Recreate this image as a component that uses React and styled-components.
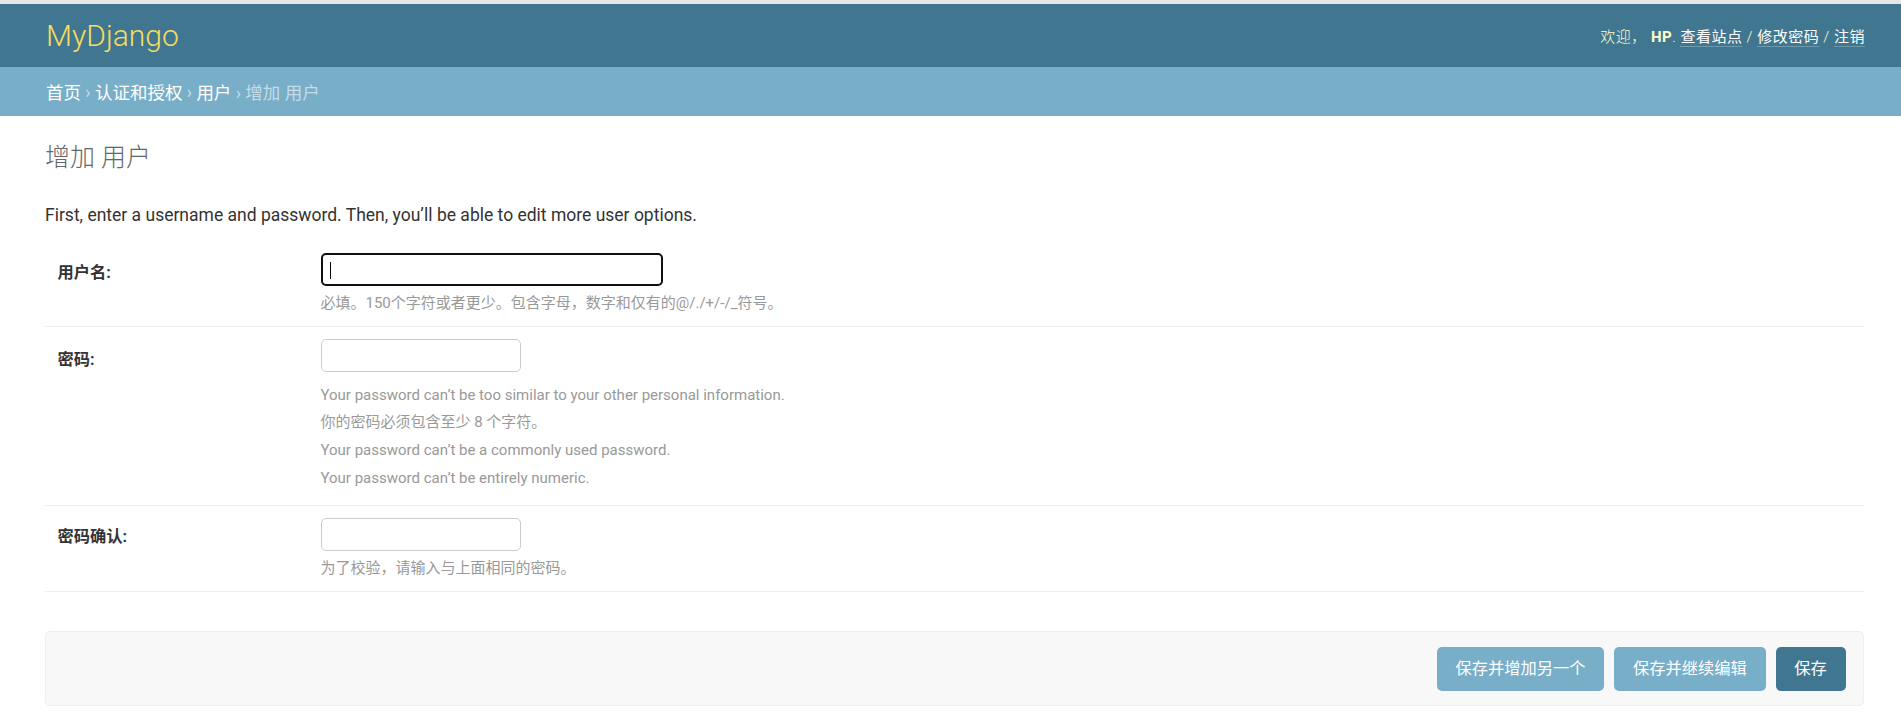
import React from "react";
import styled, { createGlobalStyle } from "styled-components";

const GlobalStyle = createGlobalStyle`
  html, body { margin: 0; padding: 0; background: #fff; }
  body {
    font-family: Roboto, "Noto Sans CJK SC", "Noto Sans", sans-serif;
    color: #333;
  }
  * { box-sizing: border-box; }
`;

const FONT = `Roboto, "Noto Sans CJK SC", "Noto Sans", sans-serif`;

const TopStrip = styled.div`
  height: 4px;
  background: #e6e6e6;
`;

const Header = styled.header`
  display: flex;
  justify-content: space-between;
  align-items: center;
  height: 63px;
  padding: 0 36px 0 46px;
  background: #417690;
  color: #ffc;
`;

const Branding = styled.h1`
  margin: 0;
  font-family: ${FONT};
  font-size: 30px;
  font-weight: 300;
  line-height: 36px;
  color: #f5dd5d;
`;

const UserTools = styled.div`
  font-family: ${FONT};
  font-size: 15px;
  letter-spacing: 0.5px;
  font-weight: 300;
  color: #ffc;
  text-align: right;
  white-space: pre;
`;

const UserName = styled.strong`
  font-weight: 700;
`;

const ToolLink = styled.a`
  color: #fff;
  text-decoration: none;
  border-bottom: 1px solid rgba(255, 255, 255, 0.25);
  font-weight: 400;
`;

const Breadcrumbs = styled.nav`
  display: flex;
  align-items: center;
  height: 49px;
  padding: 0 36px 0 46px;
  background: #79aec8;
  color: #c4dce8;
  font-family: ${FONT};
  font-size: 17.5px;
  white-space: pre;
`;

const Crumb = styled.a`
  color: #fff;
  text-decoration: none;
`;

const Content = styled.main`
  padding: 25px 37px 0 45px;
`;

const Title = styled.h1`
  margin: 0;
  font-family: ${FONT};
  font-size: 25px;
  line-height: 34px;
  font-weight: 300;
  color: #666;
`;

const Intro = styled.p`
  margin: 29px 0 14.5px;
  font-family: ${FONT};
  font-size: 17.5px;
  line-height: 22px;
  color: #333;
`;

const Fieldset = styled.fieldset`
  margin: 0;
  padding: 0;
  border: none;
  min-width: 0;
`;

const FormRow = styled.div`
  display: flex;
  padding: 12px 12.5px 13px;
  border-bottom: 1px solid #eee;
`;

const Label = styled.label`
  flex: 0 0 263px;
  padding-top: ${(p) => p.$offset || 9.5}px;
  font-family: ${FONT};
  font-size: 16.25px;
  line-height: 20px;
  font-weight: 700;
  color: #333;
`;

const Field = styled.div`
  display: flex;
  flex-direction: column;
  align-items: flex-start;
`;

const InputBox = styled.div`
  position: relative;
  width: ${(p) => p.$width}px;
  height: 33px;
  border: ${(p) => (p.$focused ? "2px solid #101010" : "1px solid #ccc")};
  border-radius: 5px;
  background: #fff;
`;

const Caret = styled.span`
  position: absolute;
  left: 7px;
  top: 7px;
  width: 1px;
  height: 17px;
  background: #000;
`;

const Help = styled.div`
  margin-top: 7px;
  font-family: ${FONT};
  font-size: 15px;
  line-height: 20px;
  color: #999;
`;

const HelpList = styled.ul`
  list-style: none;
  margin: 13px 0 4px;
  padding: 0;
  display: flex;
  flex-direction: column;
  gap: 7.7px;
`;

const HelpItem = styled.li`
  font-family: ${FONT};
  font-size: 15px;
  line-height: 20px;
  color: #999;
`;

const SubmitRow = styled.div`
  display: flex;
  justify-content: flex-end;
  gap: 10px;
  margin-top: 39px;
  padding: 15px 17.5px 14px;
  background: #f8f8f8;
  border: 1px solid #eee;
  border-radius: 5px;
`;

const Button = styled.button`
  height: 44px;
  padding: 0 18.75px;
  border: none;
  border-radius: 5px;
  background: ${(p) => (p.$default ? "#417690" : "#79aec8")};
  color: #fff;
  font-family: ${FONT};
  font-size: 16.25px;
  line-height: 20px;
  cursor: pointer;
`;

const rows = [
  {
    label: "用户名:",
    width: 342,
    focused: true,
    offset: 10,
    help: ["必填。150个字符或者更少。包含字母，数字和仅有的@/./+/-/_符号。"],
  },
  {
    label: "密码:",
    width: 200,
    offset: 11,
    list: [
      "Your password can’t be too similar to your other personal information.",
      "你的密码必须包含至少 8 个字符。",
      "Your password can’t be a commonly used password.",
      "Your password can’t be entirely numeric.",
    ],
  },
  {
    label: "密码确认:",
    width: 200,
    offset: 9.5,
    help: ["为了校验，请输入与上面相同的密码。"],
  },
];

export default function App() {
  return (
    <>
      <GlobalStyle />
      <TopStrip />
      <Header>
        <Branding>MyDjango</Branding>
        <UserTools>
          {"欢迎， "}
          <UserName>HP</UserName>
          {". "}
          <ToolLink href="#">查看站点</ToolLink>
          {" / "}
          <ToolLink href="#">修改密码</ToolLink>
          {" / "}
          <ToolLink href="#">注销</ToolLink>
        </UserTools>
      </Header>
      <Breadcrumbs>
        <Crumb href="#">首页</Crumb>
        {" › "}
        <Crumb href="#">认证和授权</Crumb>
        {" › "}
        <Crumb href="#">用户</Crumb>
        {" › 增加 用户"}
      </Breadcrumbs>
      <Content>
        <Title>增加 用户</Title>
        <Intro>
          First, enter a username and password. Then, you’ll be able to edit more user options.
        </Intro>
        <Fieldset>
          {rows.map((r) => (
            <FormRow key={r.label}>
              <Label $offset={r.offset}>{r.label}</Label>
              <Field>
                <InputBox $width={r.width} $focused={r.focused}>
                  {r.focused && <Caret />}
                </InputBox>
                {r.help && r.help.map((h) => <Help key={h}>{h}</Help>)}
                {r.list && (
                  <HelpList>
                    {r.list.map((h) => (
                      <HelpItem key={h}>{h}</HelpItem>
                    ))}
                  </HelpList>
                )}
              </Field>
            </FormRow>
          ))}
        </Fieldset>
        <SubmitRow>
          <Button>保存并增加另一个</Button>
          <Button>保存并继续编辑</Button>
          <Button $default>保存</Button>
        </SubmitRow>
      </Content>
    </>
  );
}
